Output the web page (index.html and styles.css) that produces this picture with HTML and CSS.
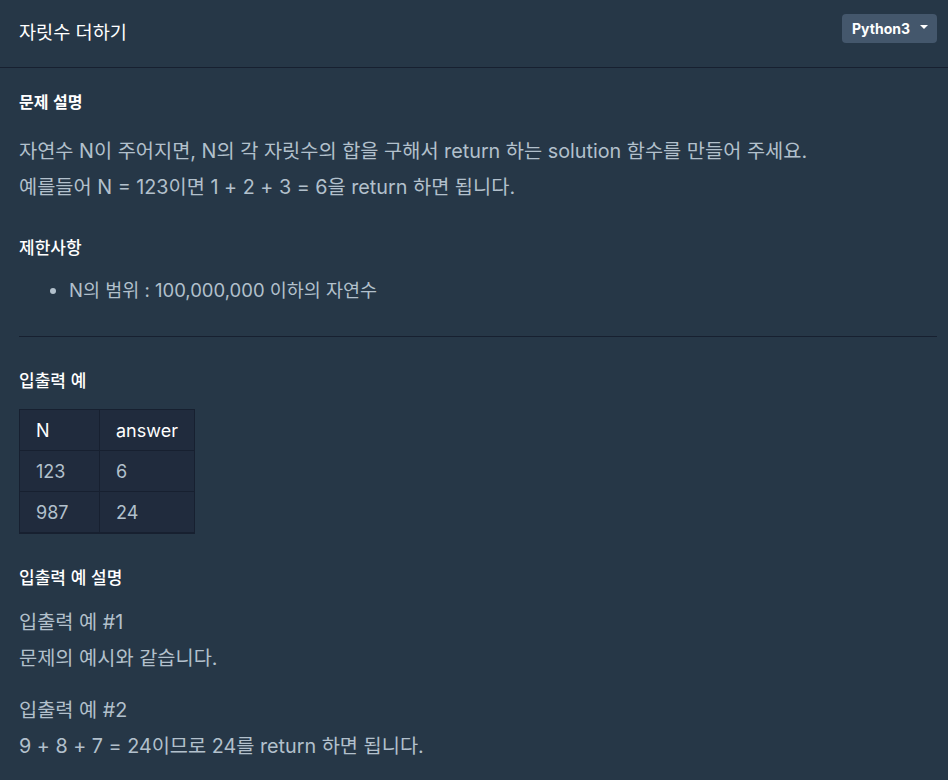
FILE: index.html
```html
<!DOCTYPE html>
<html lang="ko">
<head>
<meta charset="utf-8">
<link rel="stylesheet" href="styles.css">
</head>
<body>
<div class="page">
  <header class="top">
    <h1 class="title">자릿수 더하기</h1>
    <button class="lang">Python3<span class="caret"></span></button>
  </header>
  <main class="content">
    <h5 class="sec first">문제 설명</h5>
    <p class="para intro">자연수 N이 주어지면, N의 각 자릿수의 합을 구해서 return 하는 solution 함수를 만들어 주세요.<br>예를들어 N = 123이면 1 + 2 + 3 = 6을 return 하면 됩니다.</p>
    <h5 class="sec limits">제한사항</h5>
    <ul class="list">
      <li>N의 범위 : 100,000,000 이하의 자연수</li>
    </ul>
    <hr class="rule">
    <h5 class="sec">입출력 예</h5>
    <table class="tbl">
      <thead>
        <tr><th class="c1">N</th><th class="c2">answer</th></tr>
      </thead>
      <tbody>
        <tr><td>123</td><td>6</td></tr>
        <tr><td>987</td><td>24</td></tr>
      </tbody>
    </table>
    <h5 class="sec explain">입출력 예 설명</h5>
    <p class="para ex first-ex">입출력 예 #1<br>문제의 예시와 같습니다.</p>
    <p class="para ex">입출력 예 #2<br>9 + 8 + 7 = 24이므로 24를 return 하면 됩니다.</p>
  </main>
</div>
</body>
</html>
```

FILE: styles.css
```css
html, body {
  margin: 0;
  padding: 0;
  background: #263747;
}
body {
  font-family: "Inter", "Noto Sans CJK KR", sans-serif;
  color: #b2c0cc;
}
.page {
  width: 948px;
  height: 780px;
  overflow: hidden;
}
.top {
  display: flex;
  align-items: center;
  justify-content: space-between;
  height: 67px;
  padding: 0 11px 0 19px;
  border-bottom: 1px solid #172030;
}
.title {
  margin: -5px 0 0 0;
  font-size: 18.6px;
  font-weight: 400;
  line-height: 26px;
  color: #ffffff;
  font-family: "Noto Sans CJK KR", sans-serif;
}
.lang {
  display: flex;
  align-items: center;
  gap: 10px;
  height: 29px;
  margin-top: -10px;
  padding: 0 9px 0 10px;
  background: #44576c;
  border: 0;
  border-radius: 4px;
  color: #ffffff;
  font-family: "Inter", "Noto Sans CJK KR", sans-serif;
  font-weight: 700;
  font-size: 14px;
}
.caret {
  width: 0;
  height: 0;
  border-left: 4px solid transparent;
  border-right: 4px solid transparent;
  border-top: 4px solid #ffffff;
  margin-top: -3px;
}
.content {
  padding: 0 11px 0 19px;
}
.sec {
  margin: 0;
  font-size: 17px;
  font-weight: 500;
  line-height: 24px;
  color: #ffffff;
  font-family: "Noto Sans CJK KR", sans-serif;
}
.sec.first {
  margin-top: 21px;
  font-size: 16px;
  font-weight: 700;
}
.para {
  margin: 0;
  font-size: 19.75px;
  line-height: 36px;
}
.para.intro {
  margin-top: 20px;
}
.sec.limits {
  margin-top: 30px;
}
.list {
  margin: 16px 0 0 0;
  padding-left: 50px;
  font-size: 18.5px;
  line-height: 30px;
}
.rule {
  margin: 31px 0 31px 0;
  border: 0;
  border-top: 1px solid #172030;
}
.tbl {
  margin-top: 17px;
  border-collapse: collapse;
  background: #202b3d;
  font-size: 18px;
  border: 1px solid #172030;
  border-bottom-width: 2px;
}
.tbl th,
.tbl td {
  height: 40px;
  padding: 0 16px;
  border: 1px solid #172030;
  text-align: left;
  font-weight: 400;
}
.tbl th {
  color: #ffffff;
}
.tbl .c1 { width: 47px; }
.tbl .c2 { width: 62px; }
.sec.explain {
  margin-top: 31px;
}
.para.ex.first-ex {
  margin-top: 15px;
}
.para.ex + .para.ex {
  margin-top: 16px;
}
```
